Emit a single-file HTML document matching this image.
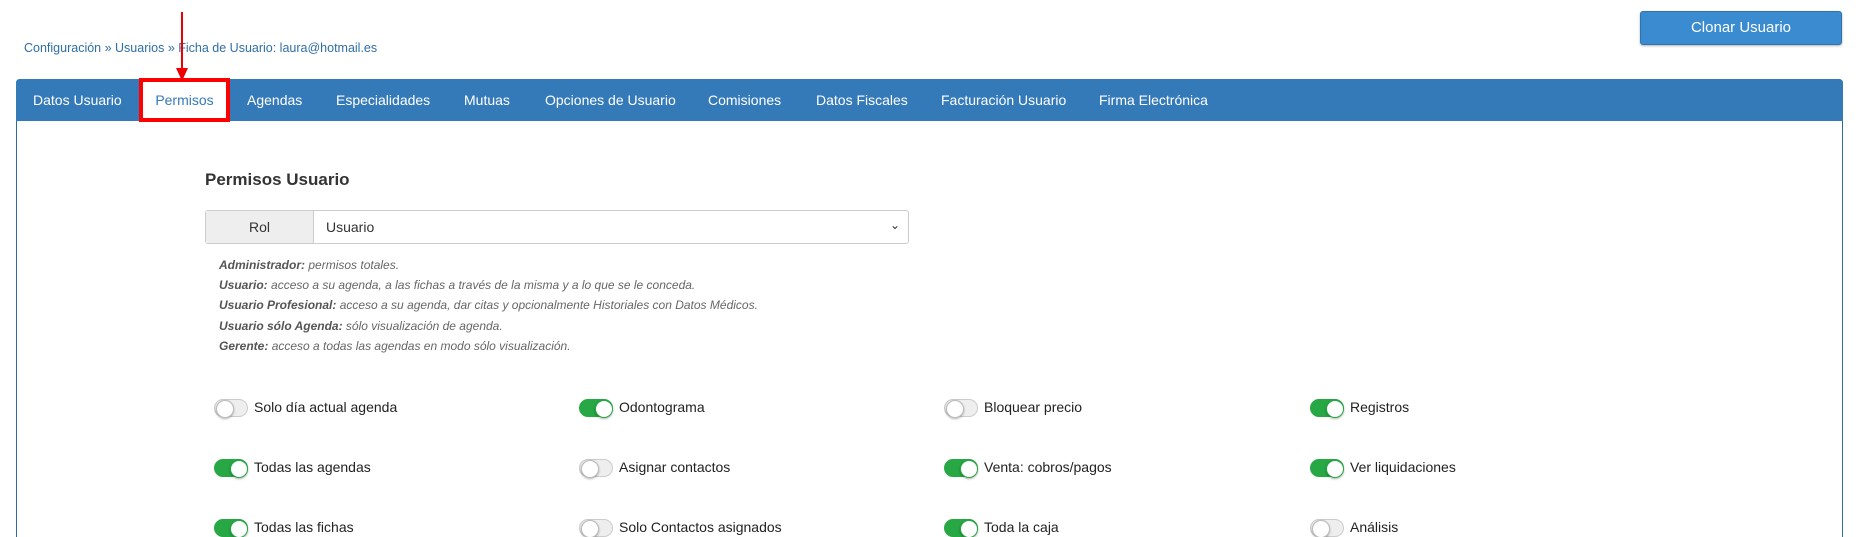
<!DOCTYPE html>
<html><head><meta charset="utf-8"><style>
*{box-sizing:border-box;margin:0;padding:0}
html,body{width:1861px;height:537px;overflow:hidden}
body{background:#fff;font-family:"Liberation Sans",sans-serif;position:relative}
.abs{position:absolute;white-space:nowrap}
.bc{left:24px;top:41px;font-size:12.5px;color:#2f6ea8}
.btn{left:1640px;top:11px;width:202px;height:34px;background:#3a8bd0;border:1px solid #2f72ad;border-radius:3px;color:#fff;font-size:15px;text-align:center;line-height:32px;box-shadow:0 1px 2px rgba(0,0,0,.3)}
.panel{left:16px;top:79px;width:1827px;height:458px;border:1px solid #2f6aa3;border-bottom:none;border-radius:4px 4px 0 0}
.bar{left:16px;top:79px;width:1827px;height:42px;background:#357ab8;border-radius:4px 4px 0 0}
.tab{top:92px;font-size:14px;color:#fff}
.act{left:139px;top:78px;width:91px;height:44px;background:#fff;border:4px solid #f00;color:#357ab8;font-size:14px;text-align:center;line-height:36px}
.arrow{left:181px;top:12px;width:2px;height:60px;background:#e00}
.arrowh{left:176px;top:68px;width:0;height:0;border-left:6px solid transparent;border-right:6px solid transparent;border-top:13px solid #e00}
.h{left:205px;top:170px;font-size:17px;font-weight:bold;color:#333}
.sel{left:205px;top:210px;width:704px;height:34px;border:1px solid #ccc;border-radius:3px;font-size:14px;color:#333}
.rol{position:absolute;left:0;top:0;width:108px;height:32px;background:#eee;border-right:1px solid #ccc;text-align:center;line-height:32px}
.help{left:219px;font-size:12px;font-style:italic;color:#666}
.help b{color:#555}
.tg{width:34px;height:18px;border-radius:9px;background:#eee;border:1px solid #ccc}
.tg::after{content:"";position:absolute;left:1px;top:0;width:16px;height:16px;border-radius:50%;background:#fff;border:1px solid #bbb;box-shadow:0 1px 2px rgba(0,0,0,.3)}
.tg.on{background:#28a745;border-color:#28a745}
.tg.on::after{left:15px;border-color:#28a745}
.lb{font-size:14px;color:#222;line-height:16px}
</style></head><body>
<div class="abs bc">Configuración » Usuarios » Ficha de Usuario: laura@hotmail.es</div>
<div class="abs btn">Clonar Usuario</div>
<div class="abs panel"></div>
<div class="abs bar"></div>
<div class="abs tab" style="left:33px">Datos Usuario</div>
<div class="abs act">Permisos</div>
<div class="abs tab" style="left:247px">Agendas</div>
<div class="abs tab" style="left:336px">Especialidades</div>
<div class="abs tab" style="left:464px">Mutuas</div>
<div class="abs tab" style="left:545px">Opciones de Usuario</div>
<div class="abs tab" style="left:708px">Comisiones</div>
<div class="abs tab" style="left:816px">Datos Fiscales</div>
<div class="abs tab" style="left:941px">Facturación Usuario</div>
<div class="abs tab" style="left:1099px">Firma Electrónica</div>
<div class="abs arrow"></div><div class="abs arrowh"></div>
<div class="abs h">Permisos Usuario</div>
<div class="abs sel"><div class="rol">Rol</div><span style="position:absolute;left:120px;top:8px">Usuario</span><span style="position:absolute;right:8px;top:7px;font-size:12px">&#8964;</span></div>
<div class="abs help" style="top:258px"><b>Administrador:</b> permisos totales.</div>
<div class="abs help" style="top:278px"><b>Usuario:</b> acceso a su agenda, a las fichas a través de la misma y a lo que se le conceda.</div>
<div class="abs help" style="top:298px"><b>Usuario Profesional:</b> acceso a su agenda, dar citas y opcionalmente Historiales con Datos Médicos.</div>
<div class="abs help" style="top:319px"><b>Usuario sólo Agenda:</b> sólo visualización de agenda.</div>
<div class="abs help" style="top:339px"><b>Gerente:</b> acceso a todas las agendas en modo sólo visualización.</div>

<div class="abs tg" style="left:214px;top:399px"></div><div class="abs lb" style="left:254px;top:399px">Solo día actual agenda</div>
<div class="abs tg on" style="left:579px;top:399px"></div><div class="abs lb" style="left:619px;top:399px">Odontograma</div>
<div class="abs tg" style="left:944px;top:399px"></div><div class="abs lb" style="left:984px;top:399px">Bloquear precio</div>
<div class="abs tg on" style="left:1310px;top:399px"></div><div class="abs lb" style="left:1350px;top:399px">Registros</div>

<div class="abs tg on" style="left:214px;top:459px"></div><div class="abs lb" style="left:254px;top:459px">Todas las agendas</div>
<div class="abs tg" style="left:579px;top:459px"></div><div class="abs lb" style="left:619px;top:459px">Asignar contactos</div>
<div class="abs tg on" style="left:944px;top:459px"></div><div class="abs lb" style="left:984px;top:459px">Venta: cobros/pagos</div>
<div class="abs tg on" style="left:1310px;top:459px"></div><div class="abs lb" style="left:1350px;top:459px">Ver liquidaciones</div>

<div class="abs tg on" style="left:214px;top:519px"></div><div class="abs lb" style="left:254px;top:519px">Todas las fichas</div>
<div class="abs tg" style="left:579px;top:519px"></div><div class="abs lb" style="left:619px;top:519px">Solo Contactos asignados</div>
<div class="abs tg on" style="left:944px;top:519px"></div><div class="abs lb" style="left:984px;top:519px">Toda la caja</div>
<div class="abs tg" style="left:1310px;top:519px"></div><div class="abs lb" style="left:1350px;top:519px">Análisis</div>
</body></html>
